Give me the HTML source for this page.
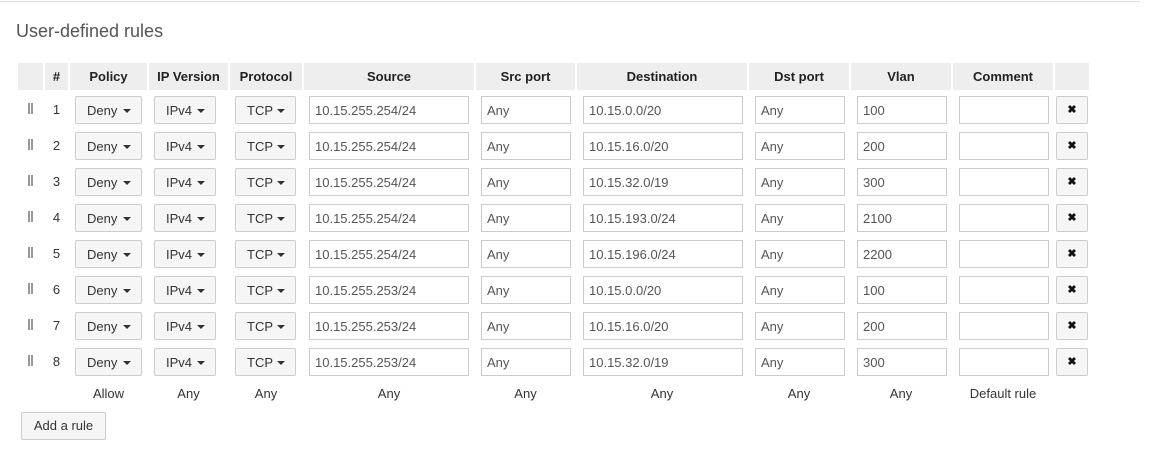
<!DOCTYPE html>
<html><head><meta charset="utf-8"><style>
*{box-sizing:border-box;margin:0;padding:0}
body{width:1149px;height:450px;background:#fff;font-family:"Liberation Sans",Arial,sans-serif;font-size:13px;color:#333;position:relative;overflow:hidden}
.top{position:absolute;left:0;top:1px;width:1140px;height:1px;background:#ddd}
h2{position:absolute;left:16px;top:21px;font-weight:normal;font-size:18px;color:#555}
.h{position:absolute;top:63px;height:27px;background:#eee;font-weight:bold;color:#222;text-align:center;line-height:28px}
.r{position:absolute;left:0;width:1149px;height:28px}
.r>*{position:absolute;top:0;height:28px;line-height:27px}
.g{left:28px;top:7px!important;width:5px;height:11px!important;border-left:2px solid #999;border-right:2px solid #999}
.n{left:45px;width:23px;text-align:center;color:#333}
.s{border:1px solid #ccc;background:#f6f6f6;border-radius:2px;color:#333;padding-left:11px}
.s:after{content:"";position:absolute;right:10px;top:12px;border-left:4px solid transparent;border-right:4px solid transparent;border-top:4px solid #333}
.p{left:75px;width:67px}.v{left:154px;width:62px}.t{left:235px;width:61px}
.i{border:1px solid #ccc;background:#fff;padding-left:5px;color:#555}
.a{left:309px;width:160px}.b{left:481px;width:90px}.c{left:583px;width:160px}.d{left:755px;width:90px}.e{left:857px;width:90px}.f{left:959px;width:90px}
.x{left:1056px;width:32px;border:1px solid #ccc;background:#f6f6f6;border-radius:2px;text-align:center;font-weight:bold;color:#111;font-size:11px}
.ft{position:absolute;top:386px;color:#333;text-align:center}
.btn{position:absolute;left:21px;top:412px;width:85px;height:28px;border:1px solid #ccc;background:#f6f6f6;border-radius:2px;text-align:center;line-height:26px;color:#333}
</style></head><body>
<div class="top"></div>
<h2>User-defined rules</h2>
<div class="h" style="left:18px;width:25px"></div>
<div class="h" style="left:45px;width:23px">#</div>
<div class="h" style="left:70px;width:77px">Policy</div>
<div class="h" style="left:149px;width:79px">IP Version</div>
<div class="h" style="left:230px;width:72px">Protocol</div>
<div class="h" style="left:304px;width:170px">Source</div>
<div class="h" style="left:476px;width:99px">Src port</div>
<div class="h" style="left:577px;width:170px">Destination</div>
<div class="h" style="left:749px;width:100px">Dst port</div>
<div class="h" style="left:851px;width:100px">Vlan</div>
<div class="h" style="left:953px;width:100px">Comment</div>
<div class="h" style="left:1055px;width:34px"></div>

<div class="r" style="top:96px"><span class="g"></span><span class="n">1</span><span class="s p">Deny</span><span class="s v">IPv4</span><span class="s t">TCP</span><span class="i a">10.15.255.254/24</span><span class="i b">Any</span><span class="i c">10.15.0.0/20</span><span class="i d">Any</span><span class="i e">100</span><span class="i f"></span><span class="x">✖</span></div>
<div class="r" style="top:132px"><span class="g"></span><span class="n">2</span><span class="s p">Deny</span><span class="s v">IPv4</span><span class="s t">TCP</span><span class="i a">10.15.255.254/24</span><span class="i b">Any</span><span class="i c">10.15.16.0/20</span><span class="i d">Any</span><span class="i e">200</span><span class="i f"></span><span class="x">✖</span></div>
<div class="r" style="top:168px"><span class="g"></span><span class="n">3</span><span class="s p">Deny</span><span class="s v">IPv4</span><span class="s t">TCP</span><span class="i a">10.15.255.254/24</span><span class="i b">Any</span><span class="i c">10.15.32.0/19</span><span class="i d">Any</span><span class="i e">300</span><span class="i f"></span><span class="x">✖</span></div>
<div class="r" style="top:204px"><span class="g"></span><span class="n">4</span><span class="s p">Deny</span><span class="s v">IPv4</span><span class="s t">TCP</span><span class="i a">10.15.255.254/24</span><span class="i b">Any</span><span class="i c">10.15.193.0/24</span><span class="i d">Any</span><span class="i e">2100</span><span class="i f"></span><span class="x">✖</span></div>
<div class="r" style="top:240px"><span class="g"></span><span class="n">5</span><span class="s p">Deny</span><span class="s v">IPv4</span><span class="s t">TCP</span><span class="i a">10.15.255.254/24</span><span class="i b">Any</span><span class="i c">10.15.196.0/24</span><span class="i d">Any</span><span class="i e">2200</span><span class="i f"></span><span class="x">✖</span></div>
<div class="r" style="top:276px"><span class="g"></span><span class="n">6</span><span class="s p">Deny</span><span class="s v">IPv4</span><span class="s t">TCP</span><span class="i a">10.15.255.253/24</span><span class="i b">Any</span><span class="i c">10.15.0.0/20</span><span class="i d">Any</span><span class="i e">100</span><span class="i f"></span><span class="x">✖</span></div>
<div class="r" style="top:312px"><span class="g"></span><span class="n">7</span><span class="s p">Deny</span><span class="s v">IPv4</span><span class="s t">TCP</span><span class="i a">10.15.255.253/24</span><span class="i b">Any</span><span class="i c">10.15.16.0/20</span><span class="i d">Any</span><span class="i e">200</span><span class="i f"></span><span class="x">✖</span></div>
<div class="r" style="top:348px"><span class="g"></span><span class="n">8</span><span class="s p">Deny</span><span class="s v">IPv4</span><span class="s t">TCP</span><span class="i a">10.15.255.253/24</span><span class="i b">Any</span><span class="i c">10.15.32.0/19</span><span class="i d">Any</span><span class="i e">300</span><span class="i f"></span><span class="x">✖</span></div>

<div class="ft" style="left:70px;width:77px">Allow</div>
<div class="ft" style="left:149px;width:79px">Any</div>
<div class="ft" style="left:230px;width:72px">Any</div>
<div class="ft" style="left:304px;width:170px">Any</div>
<div class="ft" style="left:476px;width:99px">Any</div>
<div class="ft" style="left:577px;width:170px">Any</div>
<div class="ft" style="left:749px;width:100px">Any</div>
<div class="ft" style="left:851px;width:100px">Any</div>
<div class="ft" style="left:953px;width:100px">Default rule</div>
<div class="btn">Add a rule</div>
</body></html>
